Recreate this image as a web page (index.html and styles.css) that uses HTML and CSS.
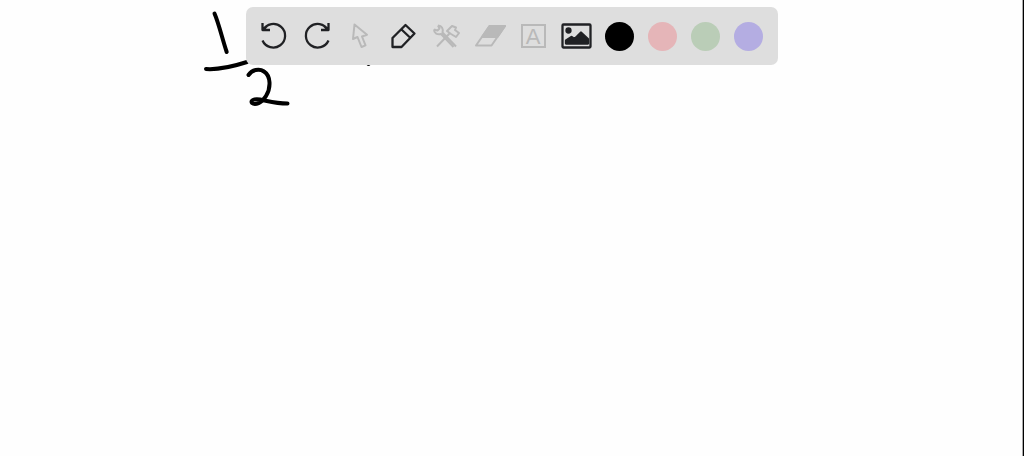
FILE: index.html
```
<!DOCTYPE html>
<html lang="en">
<head>
  <meta charset="UTF-8">
  <meta name="viewport" content="width=device-width, initial-scale=1.0">
  <title>Whiteboard</title>
  <link rel="stylesheet" href="styles.css">
</head>
<body>
  <main class="board">
    <!-- Handwriting -->
    <svg class="ink" aria-hidden="true">
      <path d="M214.500 13.500C219 24 222 38 226.700 52"/>
      <path d="M206 69C220 70 233 66.500 247 62"/>
      <path d="M248.500 75C252 70 259 68 264 71.500C271 76 271 88 266 96C262 103 255 105.500 252 103C250 100 255 98.500 260 99.500C268 101 276 103.500 287.500 103.500"/>
      <path d="M368.500 63V64"/>
    </svg>

    <!-- Toolbar -->
    <div class="toolbar" role="toolbar">
      <button class="tool" type="button" aria-label="Undo">
        <svg class="icon" viewBox="0 0 32 32"><path d="M4.500 20.500A11.800 11.800 0 1 0 5 10M4.500 3V10H12M5 10L9 6"/></svg>
      </button>
      <button class="tool" type="button" aria-label="Redo">
        <svg class="icon" viewBox="0 0 32 32"><path d="M27.500 20.500A11.800 11.800 0 1 1 27 10M27.500 3V10H20M27 10L23 6"/></svg>
      </button>
      <button class="tool muted" type="button" aria-label="Select">
        <svg class="icon" viewBox="0 0 32 32"><path d="M10.500 4.500L9 19L13.500 17L17.500 27L21.500 25.300L18 16.500L23 14.700Z"/></svg>
      </button>
      <button class="tool" type="button" aria-label="Pen">
        <svg class="icon" viewBox="0 0 32 32"><path d="M17.500 5L26.500 13.500L13.500 27H4.500V18ZM13.500 9.500L22.500 18"/></svg>
      </button>
      <button class="tool muted" type="button" aria-label="Tools">
        <svg class="icon" viewBox="0 0 32 32">
          <path d="M7 5.500C11 5.500 12.500 9 11.500 12.500L25 26.500M3 9.500C3 13.500 6.500 15 10 14L22.500 27M7 5.500L8.500 8.500L6.500 10.500L3 9.500"/>
          <path d="M16 11L21 6L25 7.500L24 10L28 13L25 17L20 14ZM18.500 13.500L6 26.500"/>
        </svg>
      </button>
      <button class="tool muted" type="button" aria-label="Eraser">
        <svg class="icon" viewBox="0 0 32 32"><path d="M15.500 6H31L17.500 25.500H2Z"/><path class="solid" d="M15.500 6H31L23.500 17H8Z"/></svg>
      </button>
      <button class="tool muted" type="button" aria-label="Text">
        <span class="letter">A</span>
      </button>
      <button class="tool" type="button" aria-label="Image">
        <svg class="icon" viewBox="0 0 32 32">
          <rect x="2.500" y="4.500" width="28" height="23" rx="1"/>
          <circle class="solid" cx="8.500" cy="10.500" r="2"/>
          <path class="solid" d="M6 23.500V20.500L11.500 17L14.500 19L21 12.500L28 19V23.500Z"/>
        </svg>
      </button>
      <button class="tool" type="button" aria-label="Black"><span class="swatch black"></span></button>
      <button class="tool" type="button" aria-label="Red"><span class="swatch red"></span></button>
      <button class="tool" type="button" aria-label="Green"><span class="swatch green"></span></button>
      <button class="tool" type="button" aria-label="Purple"><span class="swatch purple"></span></button>
    </div>
  </main>
</body>
</html>
```

FILE: styles.css
```
* {
  box-sizing: border-box;
}

body {
  margin: 0;
  background: #fefefe;
  font-family: "Liberation Sans", Arial, sans-serif;
}

.board {
  position: relative;
  min-height: 100vh;
  padding: 7px 0;
  border-right: 1px solid #000;
  box-shadow: inset -1px 0 #aaa;
  overflow: hidden;
}

/* Handwriting */
.ink {
  position: absolute;
  top: 0;
  left: 0;
  width: 100%;
  height: 100%;
  fill: none;
  stroke: #000;
  stroke-width: 4;
  stroke-linecap: round;
  stroke-linejoin: round;
}

/* Toolbar */
.toolbar {
  position: relative;
  display: grid;
  grid-template-columns: repeat(12, 1fr);
  width: 100%;
  max-width: 532px;
  height: 58px;
  margin: 0 auto;
  padding: 0 7px;
  border-radius: 7px;
  background: #dedede;
}

.tool {
  display: flex;
  align-items: center;
  justify-content: center;
  padding: 0;
  border: none;
  background: none;
  color: #202124;
  cursor: pointer;
}

.muted {
  color: #b9b9b9;
}

.icon {
  flex: none;
  width: 32px;
  height: 32px;
  fill: none;
  stroke: currentColor;
  stroke-width: 2.3;
  stroke-linejoin: round;
}

.muted .icon {
  stroke-width: 2;
}

.solid {
  fill: currentColor;
}

.letter {
  width: 25px;
  height: 24px;
  border: 2px solid currentColor;
  font-family: "Liberation Sans", Arial, sans-serif;
  font-size: 22px;
  line-height: 21px;
  text-align: center;
}

.swatch {
  width: 29px;
  height: 29px;
  border-radius: 50%;
}

.black {
  background: #000;
}

.red {
  background: #e5b5b8;
}

.green {
  background: #bacdb7;
}

.purple {
  background: #b4ade2;
}
```
